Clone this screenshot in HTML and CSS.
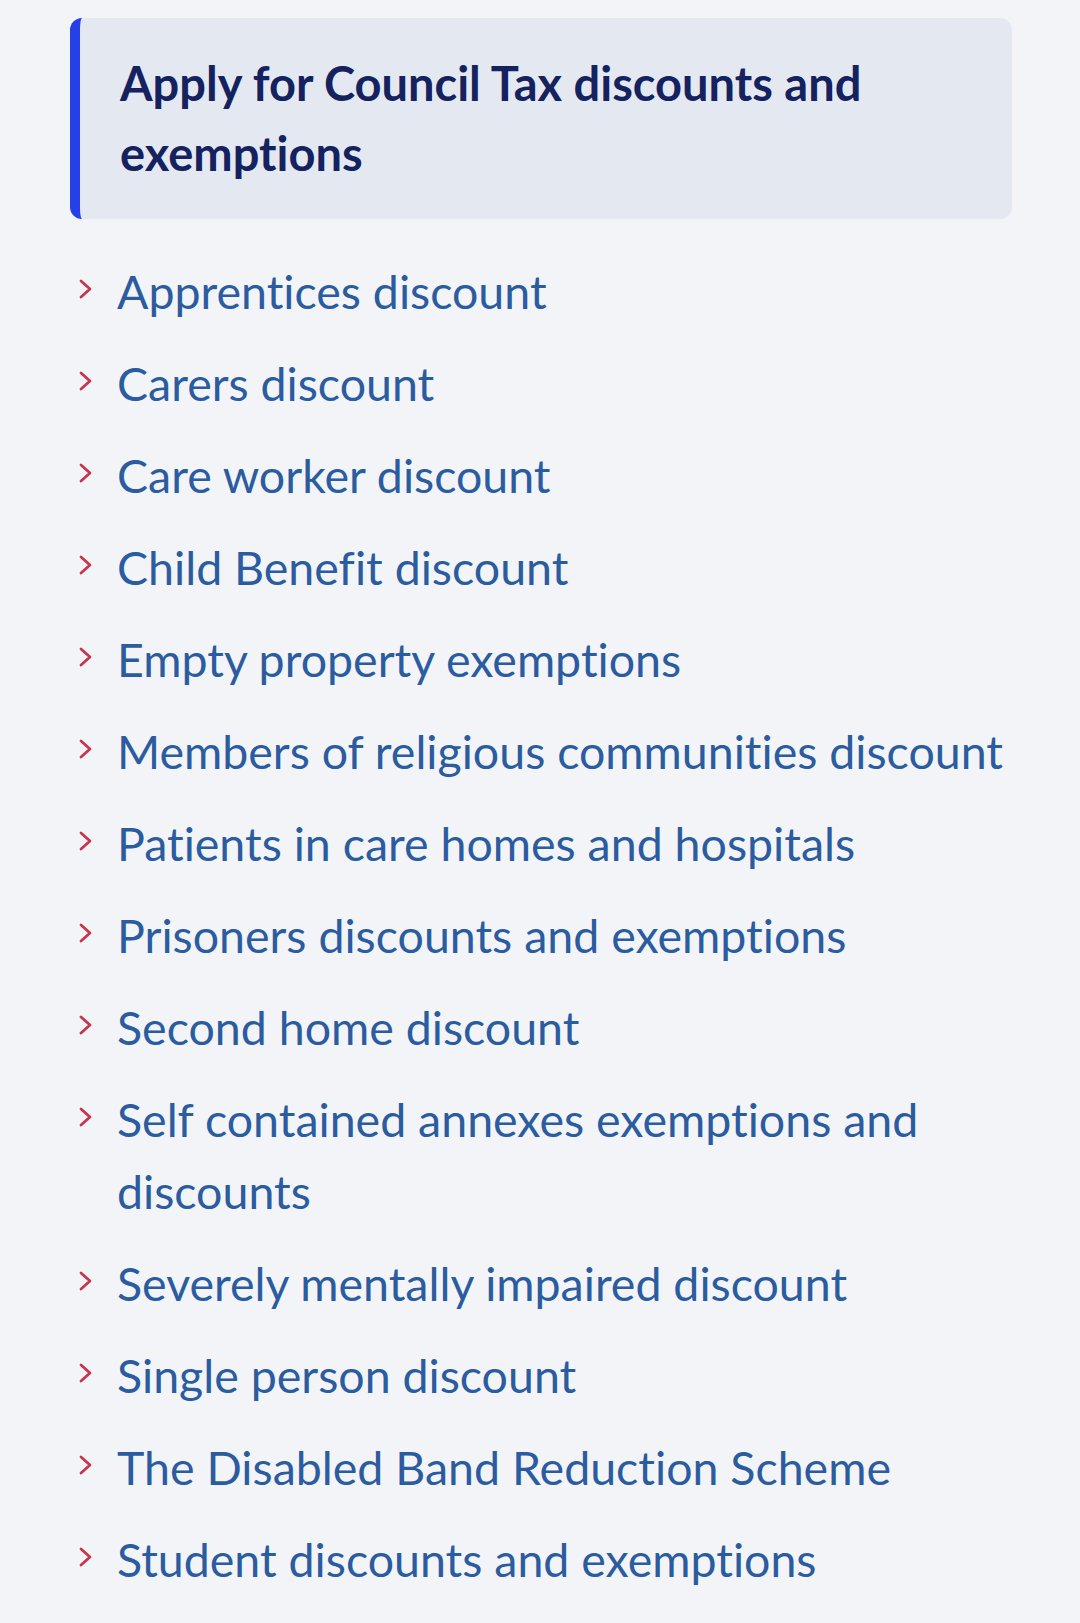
FILE: index.html
```html
<!DOCTYPE html>
<html lang="en">
<head>
<meta charset="utf-8">
<title>Apply for Council Tax discounts and exemptions</title>
<link rel="stylesheet" href="styles.css">
</head>
<body>
<main class="page">
  <section class="panel">
    <h2 class="panel-title">Apply for Council Tax discounts and exemptions</h2>
  </section>
  <ul class="links">
    <li class="link-item"><svg class="chev" viewBox="0 0 13 20"><polyline points="2,2 11,10 2,18"/></svg><a href="#">Apprentices discount</a></li>
    <li class="link-item"><svg class="chev" viewBox="0 0 13 20"><polyline points="2,2 11,10 2,18"/></svg><a href="#">Carers discount</a></li>
    <li class="link-item"><svg class="chev" viewBox="0 0 13 20"><polyline points="2,2 11,10 2,18"/></svg><a href="#">Care worker discount</a></li>
    <li class="link-item"><svg class="chev" viewBox="0 0 13 20"><polyline points="2,2 11,10 2,18"/></svg><a href="#">Child Benefit discount</a></li>
    <li class="link-item"><svg class="chev" viewBox="0 0 13 20"><polyline points="2,2 11,10 2,18"/></svg><a href="#">Empty property exemptions</a></li>
    <li class="link-item"><svg class="chev" viewBox="0 0 13 20"><polyline points="2,2 11,10 2,18"/></svg><a href="#">Members of religious communities discount</a></li>
    <li class="link-item"><svg class="chev" viewBox="0 0 13 20"><polyline points="2,2 11,10 2,18"/></svg><a href="#">Patients in care homes and hospitals</a></li>
    <li class="link-item"><svg class="chev" viewBox="0 0 13 20"><polyline points="2,2 11,10 2,18"/></svg><a href="#">Prisoners discounts and exemptions</a></li>
    <li class="link-item"><svg class="chev" viewBox="0 0 13 20"><polyline points="2,2 11,10 2,18"/></svg><a href="#">Second home discount</a></li>
    <li class="link-item"><svg class="chev" viewBox="0 0 13 20"><polyline points="2,2 11,10 2,18"/></svg><a href="#">Self contained annexes exemptions and discounts</a></li>
    <li class="link-item"><svg class="chev" viewBox="0 0 13 20"><polyline points="2,2 11,10 2,18"/></svg><a href="#">Severely mentally impaired discount</a></li>
    <li class="link-item"><svg class="chev" viewBox="0 0 13 20"><polyline points="2,2 11,10 2,18"/></svg><a href="#">Single person discount</a></li>
    <li class="link-item"><svg class="chev" viewBox="0 0 13 20"><polyline points="2,2 11,10 2,18"/></svg><a href="#">The Disabled Band Reduction Scheme</a></li>
    <li class="link-item"><svg class="chev" viewBox="0 0 13 20"><polyline points="2,2 11,10 2,18"/></svg><a href="#">Student discounts and exemptions</a></li>
  </ul>
</main>
</body>
</html>
```
FILE: styles.css
```css
html, body {
  margin: 0;
  padding: 0;
  background: #f2f4f8;
}
body {
  font-family: Lato, "Noto Sans", sans-serif;
  font-variant-ligatures: none;
}
.page {
  width: 942px;
  margin-left: 70px;
  padding-top: 18px;
}
.panel {
  background: #e4e8f1;
  border-left: 10px solid #2540e6;
  border-radius: 12px;
  padding: 30px 30px 31px 40px;
}
.panel-title {
  margin: 0;
  font-size: 47px;
  line-height: 70px;
  font-weight: 700;
  color: #152260;
}
.links {
  list-style: none;
  margin: 36px 0 0 0;
  padding: 0;
  display: flex;
  flex-direction: column;
  gap: 20px;
}
.link-item {
  display: flex;
  align-items: flex-start;
  font-size: 46.5px;
  line-height: 72px;
}
.chev {
  flex: 0 0 13px;
  width: 13px;
  height: 20px;
  margin: 24px 25px 0 9px;
  fill: none;
  stroke: #c8354d;
  stroke-width: 2.8;
  stroke-linecap: round;
  stroke-linejoin: round;
}
.link-item a {
  color: #2b5c9f;
  text-decoration: none;
}
```
